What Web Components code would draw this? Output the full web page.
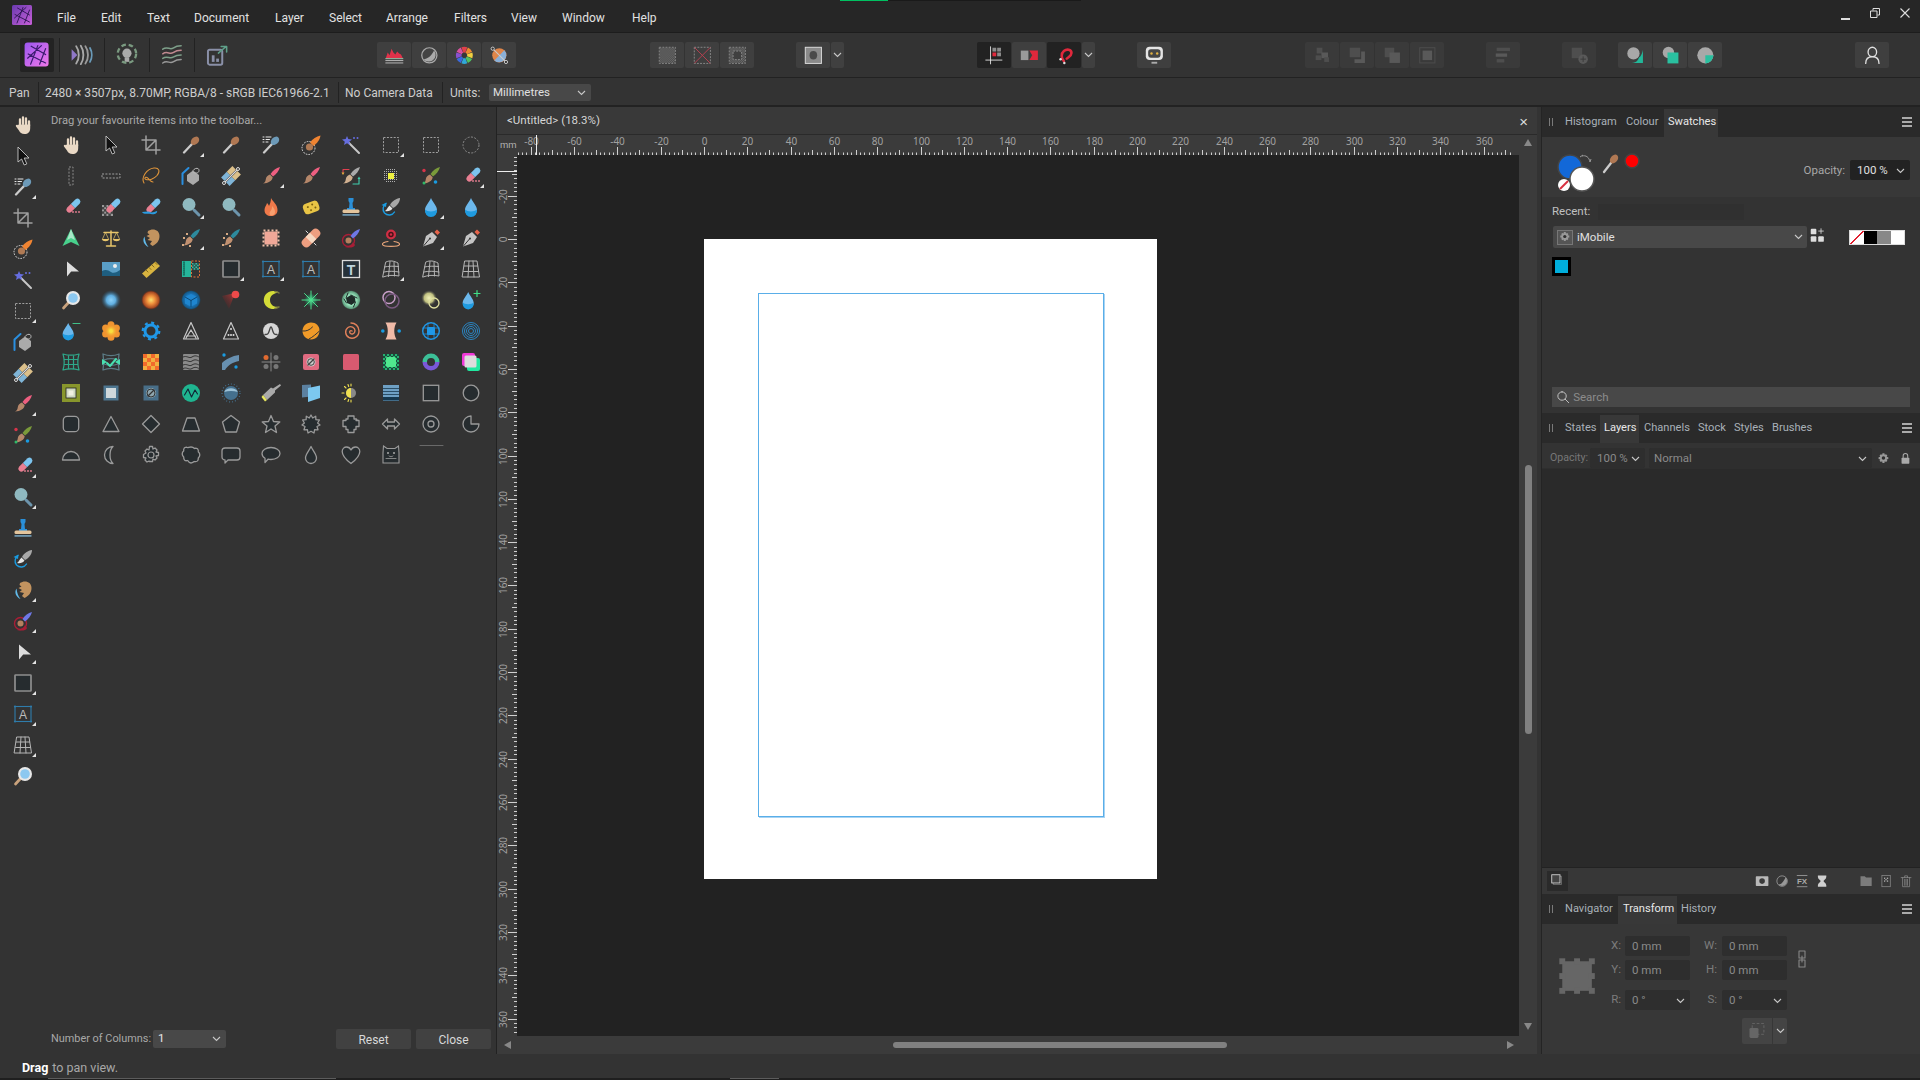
<!DOCTYPE html>
<html lang="en"><head><meta charset="utf-8"><title>Affinity Photo</title>
<style>
html,body{margin:0;padding:0;background:#333;overflow:hidden}
body{font:11.5px/1 Roboto,"Noto Sans",sans-serif;color:#c8c8c8;width:1920px;height:1080px}
</style></head><body>
<script>
/* ---------- icon library (20×20 artboard, centred on 10,10) ---------- */
const S=(d,c='#999',w=1.5,x='')=>`<path d="${d}" fill="none" stroke="${c}" stroke-width="${w}" stroke-linecap="round" stroke-linejoin="round" ${x}/>`;
const F=(d,c,x='')=>`<path d="${d}" fill="${c}" ${x}/>`;
const C=(x,y,r,c,e='')=>`<circle cx="${x}" cy="${y}" r="${r}" fill="${c}" ${e}/>`;
const R=(x,y,w,h,c,e='')=>`<rect x="${x}" y="${y}" width="${w}" height="${h}" fill="${c}" ${e}/>`;
const RG=(id,stops)=>`<radialGradient id="${id}">${stops.map(([o,c,a])=>`<stop offset="${o}" stop-color="${c}" stop-opacity="${a??1}"/>`).join('')}</radialGradient>`;
const pick=c=>S('M11 9 3 17.5','#ccc',2.3)+`<ellipse cx="14" cy="5.8" rx="3.5" ry="4.8" transform="rotate(45 14 5.8)" fill="${c}"/>`;
const brush=(c,h='#b5876a')=>F('M19 1c-1 4-3.5 7-7 9.5L9.5 8C12 4.5 15 2 19 1z',c)+F('M9 8.5l2.7 2.7c-.5 3.5-4 6-9.7 6.3 2-1 2.6-2.4 2.8-4.3C5.1 11 6.8 9 9 8.5z',h);
const eraser=F('M14.6 2.2a3 3 0 0 1 4.2 4.2L14 11.2 9.8 7z','#7cc4ee')+F('M9.8 7 14 11.2l-3.8 3.8A3 3 0 0 1 6 10.8z','#e87f92');
const mag=S('M13 13l5 5','#6d95ad',3)+C(8,7.5,6.5,'#8fb9c0');
const drop=F('M10 1C8 5.5 4 9 4 13a6 6 0 0 0 12 0C16 9 12 5.5 10 1z','#6cb8ec')+F('M4.2 12.5C6 15 14 15 15.8 12.5A6 6 0 1 1 4.2 12.5z','#1f9be0');
const nib=F('M2 18.5 5 8l6-4 5 5-4 6z','#c4c4c4')+S('M2.5 18 8.5 11','#333',1)+C(9,10.5,1,'#333')+F('M13.5 4 16 1.5l3 3-2.5 2.5z','#e8644a');
const shape=(d,x='')=>`<path d="${d}" fill="#262c2f" stroke="#9a9a9a" stroke-width="1.3" stroke-linejoin="round" ${x}/>`;
const dust=brush('#2e8a9c','#c09070')+R(2,9,2,2,'#d8ab84')+R(5,5,2,2,'#d8ab84')+R(1,16,2,2,'#d8ab84')+R(8,17,2,2,'#d8ab84');
const aframe=`<rect x="2" y="2.5" width="16" height="15" fill="none" stroke="#2f7cab" stroke-width="1.1"/>`+[[2,2.5],[18,2.5],[2,17.5],[18,17.5]].map(p=>C(p[0],p[1],1.1,'#2f7cab')).join('')+`<text x="10" y="14.5" font-size="12" text-anchor="middle" fill="#bdbdbd" font-family="Liberation Sans">A</text>`;
const gridI=S('M4 2h12l2.5 16h-17zM8 2l-1 16M12 2l1 16M3.3 7h13.4M2.6 12.5h14.8','#b5b5b5',1);
const mesh=S('M5 3c4-2 8-1 12 1l1 13c-5-1-11-1-16 1zM9 2.5 7.5 17.5M13 3l.5 14M3.5 8c4-1 9-1 14-.5M3 13c4-1 10-1 15 0','#b5b5b5',1);
const dotgrid=(()=>{let a='';for(let i=0;i<7;i++)for(let j=0;j<7;j++){if((i==0||i==6)&&(j==0||j==6))continue;a+=R(3+i*2,3+j*2,1,1,'#b0b0b0')}return a+R(7,7,6,6,'#eef040')})();
const checks=(cols,x0,y0,n,s)=>{let a='';for(let i=0;i<n;i++)for(let j=0;j<n;j++)a+=R(x0+i*s,y0+j*s,s,s,cols[(i+j)%2]);return a};
const wheelSeg=['#e0404a','#f08a30','#f0d040','#50c060','#30a8d8','#3a6ae0','#8a50d0','#d850a0'];
const wheel=wheelSeg.map((c,i)=>{const a=i*Math.PI/4-Math.PI/2-.35,b=a+.7,p=(r,t)=>`${(10+r*Math.cos(t)).toFixed(2)} ${(10+r*Math.sin(t)).toFixed(2)}`;return F(`M${p(3,a)}L${p(9,a)}A9 9 0 0 1 ${p(9,b)}L${p(3,b)}A3 3 0 0 0 ${p(3,a)}z`,c)}).join('');
const hatch=`<pattern id="h" width="2" height="2" patternUnits="userSpaceOnUse"><rect width="1" height="1" fill="#6a6a6a"/><rect x="1" y="1" width="1" height="1" fill="#6a6a6a"/><rect x="1" width="1" height="1" fill="#4a4a4a"/><rect y="1" width="1" height="1" fill="#4a4a4a"/></pattern>`;
const dsh=(x=1.5,y=1.5,w=17,h=17)=>`<rect x="${x}" y="${y}" width="${w}" height="${h}" fill="none" stroke="#8a8a8a" stroke-dasharray="2 1.3"/>`;
const logoPaths=S('M5 18 11 2.5M3 9.5l14.5 7.5M17.5 5 12.5 18M2.5 13 14 2.5M5.5 3l12 7','#3a1a6e',1);
const dim='#4e4e4e',dim2='#595959';
const ICONS={
hand:`<g stroke="#ead9c5" stroke-width="2.3" stroke-linecap="round"><path d="M7 10V4.5M10 9V2.5M13 9.5V3.5M16 11V6.5"/></g>`+F('M5.8 9.5h11.4v3.5c0 4-2.2 6-5.7 6-3 0-4.5-1.5-5.5-3.5L3 11.5c-.7-1.3.8-2.3 1.8-1.3z','#ead9c5'),
arrow:`<path d="M5 1v15l3.6-3 2.6 6 2.6-1.1-2.6-5.9H16z" fill="#111" stroke="#c8c8c8" stroke-width=".9"/>`,
crop:S('M5 1v14h14M1 5h14v14M5 15 15 5','#a0a0a0',1.5,''),
pickb:pick('#b07853'),
pickl:pick('#6d9ab8')+S('M2 2h1M5 2h5M2 4.5h1M5 4.5h3.5M2 7h1M5 7h2','#e8e8e8',1),
selb:`<circle cx="7.5" cy="13" r="6.5" fill="none" stroke="#ddd" stroke-dasharray="1.6 1.2"/>`+F('M19.5 .5c-.5 4-3.500 8-7 10.500L9 7.500C11.500 4 15.500 1.200 19.500 .5z','#f08432')+C(8.5,12,3.6,'#b07a54'),
wand:S('M8 8l10 10','#c8c8c8',2)+F('M6 1l1.3 3 3.7.5L8.2 6.8 9 10 6 8.2 3 10l.8-3.2L1 4.5l3.7-.5z','#666ee0')+C(13,3,1,'#666ee0')+C(16.5,3,1,'#666ee0'),
rsel:`<rect x="2.5" y="2.5" width="15" height="15" fill="none" stroke="#a0a0a0" stroke-dasharray="2 1.4"/>`,
esel:`<circle cx="10" cy="10" r="8" fill="none" stroke="#8c8c8c" stroke-dasharray="2 1.4"/>`,
vsel:`<rect x="8" y="1" width="4" height="18" fill="none" stroke="#8c8c8c" stroke-dasharray="2 1.4"/>`,
hsel:`<rect x="1" y="8" width="18" height="4" fill="none" stroke="#a0a0a0" stroke-dasharray="2 1.4"/>`,
lasso:S('M3 17C0 12 5 3 13 2c5-.5 6.5 3 3 7.5-3 3.5-8 5-11 4-2-.7-1-3 1-2s3 4.5 6 4.5','#e0953a',1.1),
flood:S('M1.5 18V7.5l6-5.5','#2a8fe0',2)+F('M6 9l6-4.5 6 4.5v5.5L12 19l-6-4z','#aaa')+S('M12 4.5c2-3 6-3 6 0s-4 3-6 2','#bbb',1),
swap:`<g transform="rotate(-45 10 10)"><rect x="2" y="4" width="8" height="5" fill="#7fb5d8"/><rect x="10" y="4" width="8" height="5" fill="#dcc08a"/><rect x="2" y="11" width="8" height="5" fill="#7fb5d8"/><rect x="10" y="11" width="8" height="5" fill="#dcc08a"/></g>`+S('M4 16 16 4','#ddd',1.1)+`<circle cx="3" cy="17" r="1.5" fill="#333" stroke="#ddd"/><circle cx="17" cy="3" r="1.5" fill="#333" stroke="#ddd"/>`,
bpink:brush('#ee5f80'),
brepl:brush('#aaa','#d0b090')+S('M8 3.5H2v3','#e04050',1.1)+F('M.5 6.5h3L2 9z','#e8b040')+S('M12 18h6v-5','#40d0b0',1.1)+F('M16.5 13h3L18 10.5z','#40d0b0'),
pixel:dotgrid,
mix:brush('#7a9a3a')+C(3,4.5,1.7,'#d8344a')+C(3,17,1.5,'#30b868')+C(14.5,16,1.8,'#1a9be0'),
erd:eraser+C(12,15,.9,'#e87f92')+C(15,15,.9,'#e87f92')+C(18,15,.9,'#e87f92'),
erc:checks(['#999','#444'],1,8,5,2.2)+eraser,
erw:eraser+F('M1 15c3 0 6-1 8 0s4 0 7-1c1 2-3 4-6 3-3-1-7 1-9-2z','#2a9be0'),
mag:mag,
flame:F('M10 1c2 4 6.5 6.5 6.5 12 0 4-3 6-6.5 6s-6.5-2-6.5-6c0-3 2-4.5 2.5-7 1 1 1.8 2 2 3C9 7 10 4 10 1z','#f0794a')+F('M11 9c2 2 3 4 3 6 0 2-1.5 3.5-3.5 3.5S8 16 9.5 14C11 12 11 11 11 9z','#f8a070'),
sponge:`<g transform="rotate(-20 10 10)"><rect x="2" y="5" width="16" height="11" rx="4" fill="#e8c445"/><circle cx="7" cy="9" r="1" fill="#7a6010"/><circle cx="12" cy="8" r="1" fill="#7a6010"/><circle cx="9" cy="13" r="1" fill="#7a6010"/><circle cx="14" cy="12" r="1" fill="#7a6010"/></g>`,
stamp:F('M7.5 1h5v3l-1 2 .5 5h2v2H6v-2h2l.5-5-1-2z','#2a8fd8')+R(1.5,12.5,17,3.5,'#e3c49c','rx="1.5"')+R(1.5,17,17,1.8,'#6d95ad'),
smudge:F('M19 1c0 4-3 8-7 10l-3-3c2-4 6-6.5 10-7z','#a8a8a8')+F('M8.5 8.5 11.5 11.5C10 14 7 14.5 4 14c2-1 2-3 4.5-5.5z','#e4e4e4')+S('M5 6.5C2 8.5 1 13 3.5 16c3 3 8 2.5 10-1','#1a9be0',1.4)+F('M.5 8l5-2.5L5 10z','#1a9be0'),
drop:drop,
sharp:F('M10 1 18.5 18 10 14 1.5 18z','#48d08c')+F('M10 1 14 12 10 10 6 12z','#a8e8c8'),
scale:S('M10 3v14M3 4.5h14M5.5 18h9','#e8c56a',1.5)+F('M1 11h7c0 3-7 3-7 0zM12 11h7c0 3-7 3-7 0z','#e8c56a')+S('M4.5 4.5 1.5 11M4.5 4.5 7.5 11M15.5 4.5 12.5 11M15.5 4.5 18.5 11','#e8c56a',.7),
finger:F('M7 3c4-3 11.5-2 11.5 5 0 5-3 8-7 10l-2.5-2 2-3-4.5-1 2.5-2-3.5-2 3-1.5L6.5 5z','#c2935f')+F('M3.5 8.5c-2.5 4-.5 8.5 4 10.5C5 16 4 13 3.5 8.5z','#62bcec'),
dust:dust,
patch:R(3.5,3.5,13,13,'#f0a898')+`<rect x="2.5" y="2.5" width="15" height="15" fill="none" stroke="#f0bfa8" stroke-width="2" stroke-dasharray="2 2"/>`,
band:`<g transform="rotate(45 10 10)"><rect x="5.5" y="-1" width="9" height="22" rx="4" fill="#ed9e80"/><rect x="5.5" y="7" width="9" height="6" fill="#f6d8c2"/></g>`+S('M5 3 7 5M13 15l2 2','#ddd',1),
redeye:C(7.5,12.5,6,'none','stroke="#a81e36" stroke-width="1.4"')+F('M4 19c4 1 9 1 10-2l-2-3c-1 3-4 4-8 5z','#a81e36')+F('M19 1c-1 4-3.5 7-7 9.5L9.5 8C12 4.5 15 2 19 1z','#6e78e6')+C(7.5,12.5,3,'#b5805f'),
target:C(10,6.5,5,'#d02e44')+C(10,6.5,2.7,'#44141a')+C(10,6.5,1.2,'#d02e44')+S('M7 13.5C3 14 1 15.5 1.5 16.5 2.5 19 17.5 19 18.5 16.5 19 15.5 17 14 13 13.5','#e8a57a',1.1),
nib:nib,
warrow:F('M6 2.5v15l4.2-5H18z','#ddd'),
pic:R(1,3,18,14,'#5a9ec6')+F('M1 12c4-2 6-1 9 1s6 0 9-2v6H1z','#1e5e80')+C(14,7,2,'#eee'),
ruler:F('M1 14.5 14.5 2.5 19 7 5.5 19z','#d8b440')+S('M5 11l2 2M8 8.5l2 2M11 6l2 2M14 3.5l2 2','#7d6418',.9),
cols:R(1,2,9,16,'#26b59a')+S('M3 3v14','#0d5e50',1.4,'stroke-dasharray="1 1"')+checks(['#3cb8a0','#22605a'],11,4,4,1.7)+`<rect x="10.5" y="2" width="8" height="16" fill="none" stroke="#e0703a" stroke-dasharray="2 1.5"/>`,
srect:`<rect x="2" y="2" width="16" height="16" rx=".6" fill="#262c2f" stroke="#8f8f8f" stroke-width="1.7"/>`,
atxt:aframe,
ttxt:`<rect x="1.5" y="1.5" width="17" height="17" fill="#26313a" stroke="#dcdcdc" stroke-width="1.3"/><text x="10" y="15.5" font-size="14" font-weight="700" text-anchor="middle" fill="#bcd2dc" font-family="Liberation Sans">T</text>`,
mesh:mesh,grid:gridI,
zoomt:S('M8 12 2.5 18','#c9a27c',2.7)+C(12,8,7,'#e8e8e8')+C(12,8,4.8,'#8cc8f0'),
glowb:`<defs>${RG('g',[[0,'#8cd0f8'],[.45,'#60aee0'],[1,'#2a5e80',0]])}</defs>`+C(10,10,10,'url(#g)'),
glowo:`<defs>${RG('g',[[0,'#f8e070'],[.4,'#f0903c'],[.8,'#a84a22'],[1,'#602010',0]])}</defs>`+C(10,10,10,'url(#g)'),
cube:`<defs>${RG('g',[[.5,'#1a7cc8'],[.85,'#155a8a'],[1,'#123f60',0]])}</defs>`+C(10,10,10,'url(#g)')+F('M10 4l6 3v6.5l-6 3-6-3V7z','#1f86d0')+S('M10 10.5V16.5M10 10.5 4 7M10 10.5l6-3.5','#0d4a78',1),
rdot:`<defs><linearGradient id="g" x1="1" y1="0" x2="0" y2="1"><stop offset="0" stop-color="#b83a3a"/><stop offset="1" stop-color="#3a2020" stop-opacity=".1"/></linearGradient></defs>`+F('M1 6 14 3 8 19z','url(#g)')+C(14.5,4.5,3.8,'#ef4a4a'),
cresc:F('M12 1a9 9 0 1 0 6 15.5C13 18 9 14.5 9 10s4-7 9-7.5A9 9 0 0 0 12 1z','#d4dc38')+S('M14 1.5c2 .2 3 .6 4 1.5M14 18.5c2-.2 3-.6 4-1.5','#7a7a40',1.5),
gstar:`<defs>${RG('g',[[0,'#60f0a0'],[.6,'#2a8860',.6],[1,'#222',0]])}</defs>`+C(10,10,8,'url(#g)')+S('M10 1v18M1 10h18M3.5 3.5l13 13M16.5 3.5l-13 13','#4ae48e',1),
apert:`<defs>${RG('g',[[.5,'#9ce8c0'],[.85,'#60a080'],[1,'#333',0]])}</defs>`+C(10,10,10,'url(#g)')+F('M10 5l4 2.5.5 4.5-4 3-4.5-2L5 8z','#1f2a28')+S('M10 5l6 3M14.5 12l-2 5M5.5 13 3 9M5 8l2-5','#1f2a28',1),
rings:`<circle cx="8" cy="7.5" r="6" fill="none" stroke="#c8a0c8" stroke-width="1.5"/><circle cx="11" cy="11" r="7" fill="none" stroke="#7a5a80" stroke-width="1.5"/>`,
yring:`<defs>${RG('g',[[0,'#f0f0b8'],[.6,'#c0c080'],[1,'#444',0]])}</defs>`+C(8,8,8,'url(#g)')+`<circle cx="13" cy="13" r="5" fill="none" stroke="#e0e0a0" stroke-width="1.3"/>`,
dropp:`<g transform="translate(-2 1) scale(.92)">${drop}</g>`+S('M16 .5v6M13 3.5h6','#40e088',1.2),
dropm:`<g transform="translate(-2 1) scale(.92)">${drop}</g>`+S('M12 2.5h7','#40c088',1.2),
flower:`<defs>${RG('g',[[.2,'#f8e040'],[.8,'#f4a030',.3],[1,'#f4a030',0]])}</defs>`+[0,60,120,180,240,300].map(a=>C((10+6.2*Math.sin(a*Math.PI/180)).toFixed(2),(10-6.2*Math.cos(a*Math.PI/180)).toFixed(2),3.5,'#f09430')).join('')+C(10,10,6,'#f09430')+C(10,10,7,'url(#g)'),
bgear:`<circle cx="10" cy="10" r="6" fill="none" stroke="#2098e8" stroke-width="3"/><circle cx="10" cy="10" r="8.3" fill="none" stroke="#2098e8" stroke-width="2.2" stroke-dasharray="3 3.5"/>`,
triA:S('M10 1.5 2.5 18h15zM10 9 5 17M10 9l5 8M5.5 15h9','#c8c8c8',1.2),
triD:S('M10 1.5 2.5 18h15z','#c8c8c8',1.2)+C(10,8,1,'#ddd')+C(7.5,14,1,'#ddd')+C(10,14,1,'#ddd')+C(12.5,14,1,'#ddd'),
wcirc:C(10,10,8,'#d6d6d6')+S('M4 13.5c3 0 3.5-.5 5-6 .6-2 1.4-2 2 0 1.5 5.5 2 6 5 6','#444',1.3),
oblob:F('M10 1.500c5 0 8.500 3.500 8.500 8 0 5-3.500 9-8.500 9s-8.500-4-8.500-8.500S5 1.500 10 1.500z','#f09a28')+S('M1.500 10c4 .5 7-1 10-4M8 18c4-2 7-5 10.500-8','#333',1),
spiral:S('M11 10c-1.5-1-3 .5-2 2 1.2 2 5 1 5-2.5 0-3-4-5-7-3-3.5 2.5-3 8 1 10 4.5 2 10-1 10-6.5 0-5-4-8-8-8','#e0805a',1.4),
hglass:F('M4.5 1.5h11c-3 5-3 12 0 17h-11c3-5 3-12 0-17z','#f0bba8')+C(1.8,10,1.8,'#1a9be0')+C(18.2,10,1.8,'#1a9be0'),
btarget:`<circle cx="10" cy="10" r="8.3" fill="none" stroke="#2098e8" stroke-width="1.4"/>`+R(6,6,8,8,'#2098e8','rx="1.5"')+S('M2 7h16M2 13h16M7 2v16M13 2v16','#2098e8',.8),
brings:[8.5,6.5,4.5,2.5].map(r=>`<circle cx="10" cy="10" r="${r}" fill="none" stroke="#2a86c4" stroke-width="1"/>`).join(''),
tmesh:S('M2 2c5 1.5 11 1.5 16 0-1.5 5-1.5 11 0 16-5-1.5-11-1.5-16 0 1.5-5 1.5-11 0-16zM7.5 3v14M12.5 3v14M3 7.5h14M3 12.5h14','#2ea88a',1.2),
tcheck:S('M2 2c5 2 11 2 16 0-1 5-1 11 0 16-5-2-11-2-16 0 1-5 1-11 0-16zM3 8c5-2 9-2 14 0M3 12c5 2 9 2 14 0','#5b7a84',1.3)+S('M6 11l3 3 6-7','#48e0b0',2)+F('M1 7l5 3-5 3zM19 7l-5 3 5 3z','#48e0b0'),
ochk:checks(['#f26a2c','#f2b040'],2,2,4,4),
waves:R(2,2,16,16,'#8a8a8a','rx="1"')+S('M2 5c4-2 6 2 9 0s5-1 7 0M2 9c4-2 6 2 9 0s5-1 7 0M2 13c4-2 6 2 9 0s5-1 7 0M2 16.5c4-2 6 2 9 0s5-1 7 0','#333',1),
swoosh:F('M1 18v-7c4-4 10-7 17-8v6c-6 1-11 4-14 9z','#6890b0')+C(3,3,1.7,'#1a9be0')+C(15,15,1.7,'#1a9be0'),
cross:S('M10 1v18M1 10h18','#8a8a8a',1)+C(5,5.5,2.5,'#e06a30')+C(15,5.5,2.5,'#777')+C(5,14.5,2.5,'#777')+C(15,14.5,2.5,'#777'),
pno:R(2,2,16,16,'#e06a80','rx="2"')+C(10,10,4.5,'#ccc')+S('M7 13l6-6','#444',1.3)+C(10,10,3.3,'none','stroke="#444"'),
psq:R(2,2,16,16,'#d85a70','rx="1.5"'),
gsq:checks(['#26b070','#1a4a3c'],2,2,8,2)+R(5,5,10,10,'#50e88e','rx="1.5"'),
ring2:F('M1.5 10a8.5 8.5 0 0 1 17 0h-4.5a4 4 0 0 0-8 0z','#3cc098')+F('M1.5 10a8.5 8.5 0 0 0 17 0h-4.5a4 4 0 0 1-8 0z','#7a58d8'),
sq2:R(1,1,13,13,'#f038d8','rx="2"')+R(6,6,13,13,'#20e8a0','rx="2"')+R(3.5,3.5,12,12,'#dcdcdc','rx="1.5"'),
olive:R(1,1,18,18,'#88962c')+`<rect x="5" y="5" width="10" height="10" fill="#ced8c0" stroke="#222" stroke-width=".8"/>`+R(7.5,7.5,5,5,'#f0f0e0'),
gblue:R(2.5,2.5,15,15,'#4e7690')+R(5,5,10,10,'#cfd8dc'),
gno:R(2.5,2.5,15,15,'#486e88')+C(10,10,5,'#8ea5ae')+S('M7 13l6-6','#333',1.2)+C(10,10,4,'none','stroke="#333"'),
gwave:C(10,10,9,'#1fb590')+S('M3.5 12 7 6l3.5 8L14 7l2.5 4','#123',1.1),
ball:C(10,10,7,'#44708e')+F('M3.2 9c2-5 11.6-5 13.6 0-4-1.5-9.6-1.5-13.6 0z','#9cc2d8')+`<circle cx="10" cy="10" r="9" fill="none" stroke="#44708e" stroke-width="1.2" stroke-dasharray="1 2"/>`,
torch:F('M19 1 12 5.5l-2-1L2 12l4 5 8-7.5 0-2 6-5z','#aaa')+F('M2 12l4 5-2 1.5L.5 14z','#e8e860'),
panels:F('M1 2l9-.5v12l-9 1z','#5b80a0')+F('M7 5l12-2.5V15L7 19z','#7cc8f0'),
sun:C(10,10,5,'#888')+F('M10 5a5 5 0 0 0 0 10z','#f0e050')+S('M10 1v2M10 17v2M1 10h2M3.5 3.5 5 5M3.5 16.5 5 15','#f0e050',1.1)+S('M7 1.5l.7 2M7 18.5l.7-2','#f0e050',1.1),
stripes:R(2,2,16,16,'#6ea0c4')+S('M2 5.5h16M2 8.5h16M2 11.5h16','#1a3a50',.8)+R(2,14,16,3.5,'#16384e'),
scirc:`<circle cx="10" cy="10" r="7.8" fill="#262c2f" stroke="#9a9a9a" stroke-width="1.3"/>`,
ssq:`<rect x="2.3" y="2.3" width="15.4" height="15.4" fill="#262c2f" stroke="#9a9a9a" stroke-width="1.3"/>`,
srnd:`<rect x="2.3" y="2.3" width="15.4" height="15.4" rx="4" fill="#262c2f" stroke="#9a9a9a" stroke-width="1.3"/>`,
stri:shape('M10 2.5 18 17.5H2z'),sdia:shape('M10 1.5 18.5 10 10 18.5 1.5 10z'),strap:shape('M6 4h8l4.5 13h-17z'),spent:shape('M10 1.5 18.5 8 15.5 18h-11L1.5 8z'),
sstar:shape('M10 1.5 12.5 7.5 18.8 8 14 12l1.5 6.5L10 15l-5.5 3.5L6 12 1.2 8l6.3-.5z'),
sburst:shape('M10 1l1.7 3 3-1.8.2 3.5 3.5.3-1.8 3 2.4 2-3 1.5 1 3.3-3.4-.2-.6 3.4-3-1.7-3 1.7-.6-3.4-3.4.2 1-3.3-3-1.5 2.4-2-1.8-3 3.5-.3.2-3.5 3 1.8z'),
scog:shape('M7 2h6v3h2.500l1 1.500h-1.500v0H18v6h-3v3h-2v3H7v-3H5v-3H2v-6h3V5h2z'),
sarr:shape('M1.5 10 6.5 5v3h7V5l5 5-5 5v-3h-7v3z'),
sdon:`<circle cx="10" cy="10" r="8" fill="#262c2f" stroke="#9a9a9a" stroke-width="1.3"/><circle cx="10" cy="10" r="3" fill="#262c2f" stroke="#9a9a9a" stroke-width="1.3"/>`,
spie:shape('M10 2a8 8 0 1 0 8 8h-8z'),
shalf:shape('M1.5 15a8.5 8.5 0 0 1 17 0z'),
smoon:shape('M12 1.5a8.5 8.5 0 0 0 0 17C8 15 8 5 12 1.5z'),
sgear:shape('M8.5 1.5h3l.5 2.5 2-1 2 2-1 2 2.5.5v3l-2.5.5 1 2-2 2-2-1-.5 2.5h-3L8 16l-2 1-2-2 1-2-2.5-.5v-3L5 8 4 6l2-2 2 1z')+`<circle cx="10" cy="10" r="3" fill="none" stroke="#9a9a9a" stroke-width="1.2"/>`,
scloud:shape('M10 2c2 0 3 1 3.5 1.5 1-.5 3-.3 3.5 1 .5 1 .3 2 .3 2.5 1 .5 1.5 2 1.5 3s-.5 2-1.5 3c0 .8 0 1.7-.5 2.5s-2.5 1.3-3.5 1C12.5 17 11 18 10 18s-2.5-1-3.3-2.5c-1 .3-3 .2-3.5-1-.5-.8-.5-1.7-.5-2.5-1-1-1.5-2-1.5-3s.5-2.5 1.5-3c0-.5-.2-1.5.3-2.5.5-1.3 2.5-1.5 3.5-1C7 3 8 2 10 2z'),
sbub:shape('M4 3h12a3 3 0 0 1 3 3v6a3 3 0 0 1-3 3H7l-3 3v-3a3 3 0 0 1-3-3V6a3 3 0 0 1 3-3z'),
sbub2:shape('M10 2.5c5 0 9 2.5 9 6s-4 6-9 6c-.8 0-2 0-3-.3L4 17.5v-4.3c-2-1.2-3-2.8-3-4.7 0-3.5 4-6 9-6z'),
stear:shape('M10 1.5C8 6 4.5 9 4.5 13a5.5 5.5 0 0 0 11 0C15.5 9 12 6 10 1.5z'),
sheart:shape('M10 18.5C4 14 1.2 10.5 1.2 6.5 1.2 3.5 3.5 2 5.5 2c2 0 3.5 1 4.5 3 1-2 2.5-3 4.5-3 2 0 4.3 1.5 4.3 4.5 0 4-2.8 7.5-8.8 12z'),
scat:`<path d="M2.5 1 6 3.5h8L17.500 1 18 8v10H2V8z" fill="#262c2f" stroke="#9a9a9a" stroke-width="1.1"/>`+C(7,8,1,'#aaa')+C(13,8,1,'#aaa')+S('M8 11c1 1 3 1 4 0M5 13.5h10','#9a9a9a',.8),
sline:S('M-1 0H22','#777',.8,'transform="translate(0 .5)"'),
/* top bar */
persona:`<defs><linearGradient id="g" x1="0" y1="0" x2="1" y2="1"><stop offset="0" stop-color="#9b56f0"/><stop offset="1" stop-color="#f078e8"/></linearGradient></defs>`+R(0,0,20,20,'url(#g)','rx="2.5"')+logoPaths,
logo:`<defs><linearGradient id="g" x1="0" y1="0" x2="1" y2="1"><stop offset="0" stop-color="#6a3ab0"/><stop offset="1" stop-color="#c860d8"/></linearGradient></defs>`+R(0,0,20,20,'url(#g)','rx="1.5"')+S('M5 18 11 2.5M3 9.5l14.5 7.5M17.5 5 12.5 18M2.5 13 14 2.5M5.5 3l12 7','#2a1450',.9),
liq:F('M1 5l5 5-5 5z','#8f78c8')+S('M5 2.5c3 4 3 11 0 15M9 2c3 4.5 3 11.5 0 16','#a8a8a8',1.6)+S('M13 2.5c3 4 3 11 0 15','#9a9a9a',1.6)+S('M17 4c2 3.5 2 8.5 0 12','#6a9ab8',1.6),
dev:C(10,8.5,4,'#aaa')+R(8,12,4,4,'#aaa')+`<circle cx="10" cy="9" r="8" fill="none" stroke="#7a9a80" stroke-width="2" stroke-dasharray="4 2.5"/>`,
tone:S('M2 5c4-3 6 1 9-1s5-2 7-2','#7ea08a',1.3)+S('M2 9c4-3 6 1 9-1s5-2 7-2','#c08a90',1.3)+S('M2 13c4-3 6 1 9-1s5-2 7-2','#7ea08a',1.3)+S('M2 17c4-3 6 1 9-1s5-2 7-2','#999',1.3),
exp:`<rect x="1.5" y="5" width="13" height="13.5" rx="1.5" fill="none" stroke="#8a90a8" stroke-width="1.8"/>`+R(5,10,2.5,6,'#8a90a8')+R(9,13,2.5,3,'#8a90a8')+S('M11 8l7-6M13.5 2H18.5V7','#5fa08a',1.4),
hist:S('M1 18h18M1 15.5h18','#ddd',.8)+F('M1 13l2-6 2 3 2-7 2 4 2 2 2-3 2 2 2 1 2 4z','#e0324a')+S('M1 13.5h18','#9ccab0',1),
tonei:`<circle cx="10" cy="10" r="8" fill="#444" stroke="#aaa" stroke-width="1.3"/>`+F('M15 5a7 7 0 0 1-11 9c4 0 8-3 11-9z','#aaa'),
wheel:wheel+C(10,10,2.4,'#383838'),
scope:`<circle cx="10" cy="10" r="7.5" fill="#e0864a"/>`+F('M15.3 4.7a7.5 7.5 0 0 1-10.6 10.6z','#8ab0d8')+S('M2.5 2.5l15 15','#ccc',1.1)+`<circle cx="3" cy="3" r="1.7" fill="#333" stroke="#ccc"/><circle cx="17" cy="17" r="1.7" fill="#333" stroke="#ccc"/>`,
sfull:`<defs>${hatch}</defs>`+R(2,2,16,16,'url(#h)')+dsh(),
sx:dsh()+S('M2 2l16 16M18 2 2 18','#b84050',1),
sinv:`<defs>${hatch}</defs>`+R(2,2,16,16,'url(#h)')+dsh()+R(5.5,5.5,9,9,'#404040')+dsh(5.5,5.5,9,9),
mask:`<rect x="1.5" y="1.5" width="17" height="17" fill="#8a8a8a" stroke="#dedede" stroke-width="1"/><ellipse cx="10" cy="10" rx="4" ry="4.5" fill="#4a4a4a"/>`,
snapg:S('M6 1v18M1 15h17','#eee',.9)+R(8,2,4,4,'#8c8c8c')+R(13,2,4,4,'#8c8c8c')+R(13,7,4,4,'#8c8c8c')+R(8,7,4,4,'#e0283c'),
snapr:R(1,5,8,10,'#9a9a9a')+F('M10 5h9v10h-9l3-5z','#e0283c'),
magnet:S('M9.5 16c-3-3-3-8 0-10.5s8-2 8 2c0 3-3 4-5 6','#e0283c',2.7,'')+C(6,14,1.3,'#ddd')+C(10,18,1.3,'#ddd'),
robot:F('M5 1h10c2.5 0 4 1.5 4 4v6c0 2.5-1.5 4-4 4H5c-2.5 0-4-1.5-4-4V5c0-2.5 1.5-4 4-4z','#e4e4e4')+R(3.5,3.5,13,9,'#444','rx="3"')+C(7,8,1.3,'#e0b040')+C(13,8,1.3,'#e0b040')+R(7,16.8,6,2,'#aaa'),
d1:R(4,2,6,6,dim)+R(9,7,7,6,dim2)+R(3,10,6,5,dim)+R(12,12,5,5,dim),
d2:R(2,2,11,10,dim)+F('M14 6h4v12H7v-4h7z',dim2),
d3:R(2,2,10,10,dim)+R(7,7,11,11,dim2),
d4:`<rect x="2" y="2" width="16" height="16" fill="none" stroke="${dim}"/>`+R(5,5,10,10,dim2),
d5:R(3,2,14,3.5,dim)+R(2,8,12,3.5,dim2)+R(3,14,8,3.5,dim),
d6:R(2,2,11,11,dim)+C(14,14,5,dim2)+S('M14 11.5v5M11.5 14h5','#3a3a3a',1),
op1:C(8,8,6.5,'#a8a8a8')+F('M18 4v14H6c6 0 7-4 8-6 1 0 3-3 4-8z','#22b89a'),
op2:C(8,7,6,'#a8a8a8')+R(7,7,11.5,11.5,'#2ac0a0'),
op3:C(10,10,8.5,'#a8a8a8')+F('M18.5 10a8.5 8.5 0 0 1-8.5 8.5V10z','#2ac0a0'),
user:S('M3 18.5c0-4.5 2.5-7 7-7s7 2.5 7 7M10 11.5a4.5 5 0 1 0 0-10 4.5 5 0 0 0 0 10z','#e0e0e0',1.4),
add:R(1,1,6,6,'#ddd','rx="1"')+R(1,9,6,6,'#ddd','rx="1"')+R(9,9,6,6,'#ddd','rx="1"')+S('M12 1v5M9.5 3.5h5','#ddd',.9),
layersb:`<rect x="4" y="4" width="11" height="11" fill="none" stroke="#777"/><rect x="2" y="2" width="11" height="11" fill="#444" stroke="#ddd" stroke-width="1.1"/>`,
mbtn:R(1,3,18,14,'#b8b8b8','rx="1"')+C(10,10,4,'#3a3a3a'),
adj:C(10,10,7.5,'none','stroke="#999" stroke-width="1.2"')+F('M15 5a7 7 0 0 1-10 10c4 0 7-4 10-10z','#999'),
fxb:S('M3 2h14M3 18h14','#aaa',1.1)+`<text x="10" y="14.5" font-size="11.5" font-weight="700" text-anchor="middle" fill="#aaa" font-family="Liberation Sans">FX</text>`,
glass:F('M4 2h12v2c0 3-4 4.5-4 6s4 3 4 6v2H4v-2c0-3 4-4.5 4-6S4 7 4 4z','#cfcfcf'),
folder:F('M2 3h6l2 2h8v12H2z','#7c7c7c'),
mfilt:`<rect x="4" y="2" width="12" height="16" fill="none" stroke="#888" stroke-width="1.1"/>`+checks(['#aaa','#3a3a3a'],7,5,3,2),
trash:S('M3 5h14M8 5V2.5h4V5M5 5v13h10V5M8 7.5V16M10 7.5V16M12 7.5V16','#888',1.1),
gearm:F('M8.5 2h3l.5 2.5 2-1 2 2-1.1 2L17.5 8v3l-2.6.6 1.1 2-2 2-2-1.1L11.5 17h-3L8 14.5 6 15.6l-2-2 1.1-2L2.5 11V8l2.6-.5L4 5.5l2-2 2 1z','#999')+C(10,9.5,2.7,'#2e2e2e'),
lock:R(4,9,12,9,'#aaa','rx="1"')+S('M6.5 9V6a3.5 3.5 0 0 1 7 0v3','#aaa',1.6),
searchi:S('M8.5 2.5a6 6 0 1 1 0 12 6 6 0 0 1 0-12zM13 13l5 5','#ccc',1.3),
link:S('M7 2h6v7H7zM7 11h6v7H7zM10 7v6','#888',1.1),
trbtn:`<rect x="5" y="2" width="13" height="12" fill="none" stroke="#666" stroke-dasharray="3 2"/>`+R(2,7,10,11,'#666','rx="1.5"'),
anchor:(()=>{let a=R(2,2,16,16,'#666');[[1,1],[9,1],[17,1],[1,9],[17,9],[1,17],[9,17],[17,17]].forEach(p=>a+=R(p[0]-.6,p[1]-.6,3.2,3.2,'#666'));return a})(),
};
const SKIN=`:host{display:inline-flex;align-items:center;justify-content:center;flex:none}`;
/* ---------- tiny definition helper ---------- */
function def(name,css,html,init){
  customElements.define(name,class extends HTMLElement{
    connectedCallback(){
      if(this.shadowRoot)return;
      const r=this.attachShadow({mode:'open'});
      r.innerHTML=`<style>${css}</style>`+(typeof html==='function'?html(this):html);
      if(init)init(this,r);
    }
  });
}
/* Icon: bounding box slightly larger than the art, so the corner triangle can sit outside of it */
def('af-icon',SKIN+`svg{display:block;overflow:visible}`,h=>{
  const s=+(h.getAttribute('s')||20),full=s*(26/20);
  return `<svg width="${full}" height="${full}" viewBox="-3 -3 26 26" aria-hidden="true">${ICONS[h.getAttribute('n')]||''}${h.hasAttribute('c')?'<path d="M23 18v4h-4z" fill="#e4e4e4"/>':''}</svg>`;
});
def('af-chev',SKIN,`<svg width="9" height="6" viewBox="0 0 9 6"><path d="M1 1l3.5 3.5L8 1" fill="none" stroke="#c8c8c8" stroke-width="1.1"/></svg>`);
def('af-burger',SKIN+`:host{flex-direction:column;gap:2px}i{display:block;width:10px;height:2px;background:#aaa}`,`<i></i><i></i><i></i>`);
def('af-grip',SKIN+`:host{gap:2px;width:4px}i{display:block;width:1px;height:8px;background:#7a7a7a}`,`<i></i><i></i>`);
/* Menu bar */
def('af-menubar',`:host{display:flex;align-items:center;height:32px;background:#262626;border-bottom:1px solid #1d1d1d;box-sizing:content-box;position:relative;padding-left:9px}
.s{position:absolute;left:840px;top:0;width:241px;height:1px;background:#1a1a1a}.s i{display:block;width:48px;height:1px;background:#00c060}
.lg{margin-top:-2px}
.w{margin-left:auto;display:flex;align-items:center;gap:0;padding-right:7px}`,
`<div class="s"><i></i></div><af-icon class="lg" n="logo" s="20"></af-icon><slot></slot>
<div class="w"><slot name="win"></slot></div>`);
def('af-menu-item',`:host{display:block;font-size:12px;color:#e2e2e2;margin-top:4px;white-space:nowrap}`,`<slot></slot>`);
/* Persona + tool bar */
def('af-toolbar',`:host{display:flex;align-items:center;height:44px;background:#333;border-bottom:1px solid #222;padding-left:15px}`,`<slot></slot>`);
def('af-persona',`:host{display:flex;align-items:center;justify-content:center;width:45px;height:34px;border-right:1px solid #222;box-sizing:border-box}
.on{display:flex;align-items:center;justify-content:center;width:34px;height:34px;background:#232323;border-radius:2px}:host([last]){border-right:0}`,`<span class="on"><slot></slot></span>`,
(h,r)=>{if(!h.hasAttribute('on'))r.querySelector('.on').style.background='none'});
def('af-group',`:host{display:flex;gap:1px}`,`<slot></slot>`);
def('af-tbtn',`:host{display:flex;align-items:center;justify-content:center;width:34px;height:26px;background:#3f3f3f;border-radius:2px}
:host([dark]){background:#222}:host([dim]){background:#3a3a3a}:host([narrow]){width:13px;background:#404040}`,`<slot></slot>`);
/* Context bar */
def('af-context',`:host{display:flex;align-items:center;height:25px;padding-top:2px;background:#333;border-bottom:2px solid #222;font-size:12px;color:#cdcdcd}`,`<slot></slot>`);
def('af-ctx',`:host{display:flex;align-items:center;height:21px;box-sizing:border-box;border-right:1px solid #222;white-space:nowrap}:host([last]){border-right:0}`,`<slot></slot>`);
def('af-field',`:host{display:flex;align-items:center;box-sizing:border-box;background:var(--bg,#2c2c2c);height:20px;padding:1px 5px 0 7px;border-radius:2px;white-space:nowrap;color:var(--fg,#909090);font-size:11.5px;flex:none}
span{flex:1}`,`<span><slot></slot></span><slot name="end"></slot>`);
/* Tools column */
def('af-tools',`:host{display:grid;grid-auto-rows:31px;justify-items:center;align-items:center;width:46px;padding-top:2.5px;align-content:start;box-sizing:border-box}`,`<slot></slot>`);
def('af-customise',`:host{display:flex;flex-direction:column;width:451px;height:100%;box-sizing:border-box;padding:0 5px 5px 5px;border-right:1px solid #222;color:#b5b5b5;font-size:11.2px}
.t{height:22.5px;padding-top:7px;box-sizing:border-box;line-height:13px;color:#a8a8a8;white-space:nowrap}
.g{display:grid;grid-template-columns:repeat(11,40px);grid-auto-rows:31px;justify-items:center;align-items:center;flex:1;align-content:start}
.f{display:flex;align-items:center;height:20px}`,
`<div class="t">Drag your favourite items into the toolbar...</div><div class="g"><slot></slot></div>
<div class="f"><slot name="foot"></slot></div>`);
def('af-btn',`:host{display:flex;align-items:center;justify-content:center;width:75px;height:20px;padding-top:1px;box-sizing:border-box;background:#414141;border-radius:2px;color:#d8d8d8;font-size:12px}`,`<slot></slot>`);
/* Rulers */
const RS=2.1655;
def('af-hruler',`:host{display:block;height:20px;background:#3b3b3b;overflow:hidden}svg{display:block}`,()=>{
 let t='',x0=187;for(let u=-86;u<=372;u+=2){const x=Math.round(x0+u*RS)+.5;if(x<1||x>1001)continue;const L=u%20==0?8:u%10==0?5:2.5;t+=`<path d="M${x} ${20-L}V20" stroke="#cfcfcf"/>`;if(u%20==0)t+=`<text x="${x}" y="10" text-anchor="middle">${u}</text>`}
 return `<svg width="1002" height="20" font-size="10" fill="#a0a0a0" font-family="Noto Sans,sans-serif">${t}<path d="M19.5 0V20" stroke="#eee"/></svg>`});
def('af-vruler',`:host{display:block;width:20px;background:#3b3b3b;overflow:hidden}svg{display:block}`,()=>{
 let t='',y0=84;for(let u=-38;u<=372;u+=2){const y=Math.round(y0+u*RS)+.5;if(y<1||y>880)continue;const L=u%20==0?9:u%10==0?5:3;t+=`<path d="M${20-L} ${y}H20" stroke="#cfcfcf"/>`;if(u%20==0)t+=`<text transform="translate(9.5 ${y}) rotate(-90)" text-anchor="middle">${u}</text>`}
 return `<svg width="20" height="881" font-size="10" fill="#a0a0a0" font-family="Noto Sans,sans-serif">${t}<path d="M0 16.5H20" stroke="#eee"/></svg>`});
/* Document view */
def('af-doc',`:host{display:grid;grid-template-columns:20px 1002px 18px;grid-template-rows:28px 20px 881px 18px;width:1040px;background:#3b3b3b}
.tab{grid-column:1/-1;display:flex;align-items:center;background:#393939;border-bottom:1px solid #2a2a2a;padding:1px 9px 0 10px;font-size:11.5px;color:#d6d6d6;box-sizing:border-box}
.tab span{flex:1}.x{color:#ddd;font-size:15px;line-height:1;font-family:"Liberation Sans",sans-serif}
.mm{display:flex;justify-content:flex-start;padding:5px 0 0 3px;font-size:9.5px;color:#b0b0b0;box-sizing:border-box}
.can{background:#222;padding:84px 0 0 187px;box-sizing:border-box;overflow:hidden}
.vs,.hs{position:relative;background:#3b3b3b}.arr{position:absolute;width:0;height:0;border:4px solid transparent}
.thumbv{position:absolute;left:6px;top:310px;width:7px;height:269px;background:#808080;border-radius:4px}
.thumbh{position:absolute;left:396px;top:6px;width:334px;height:6px;background:#808080;border-radius:3px}
.hs{grid-column:1/3;}
.corner{background:#3b3b3b}`,
`<div class="tab"><span>&lt;Untitled&gt; (18.3%)</span><span class="x" style="flex:none">×</span></div>
<div class="mm">mm</div><af-hruler></af-hruler><div class="corner"></div>
<af-vruler></af-vruler><div class="can"><slot></slot></div>
<div class="vs"><i class="arr" style="left:5px;top:-16px;border-bottom:7px solid #888;border-top:0"></i><i class="thumbv"></i><i class="arr" style="left:5px;bottom:6px;border-top:7px solid #888;border-bottom:0"></i></div>
<div class="hs"><i class="arr" style="left:7px;top:5px;border-right:7px solid #888;border-left:0"></i><i class="thumbh"></i><i class="arr" style="right:5px;top:5px;border-left:7px solid #888;border-right:0"></i></div>
<div class="corner"></div>`);
def('af-page',`:host{display:block;width:453px;height:640px;background:#fff;padding:54px 53px 62px 54px;box-sizing:border-box}div{height:100%;box-sizing:border-box;border:1px solid #5aaee8;box-shadow:1px 1px 0 #a8d4f4}`,`<div></div>`);
/* Panels */
def('af-panel',`:host{display:flex;flex-direction:column;min-height:0;background:#353535}
.tabs{display:flex;align-items:flex-end;height:30px;flex:none;background:#2a2a2a;box-sizing:border-box;position:relative;padding-left:19px}
.g{position:absolute;left:7px;top:11px}.b{position:absolute;right:8px;top:10px}
.body{flex:1;display:flex;flex-direction:column;min-height:0}`,
h=>`<div class="tabs"><af-grip class="g"></af-grip><slot name="tab"></slot><af-burger class="b"></af-burger></div><div class="body"><slot></slot></div>`);
def('af-tab',`:host{display:flex;align-items:center;height:28px;padding:0 0 2px 4px;box-sizing:border-box;font-size:11.1px;color:#a9b1b8;white-space:nowrap}
:host([on]){background:#383838;color:#e8e8e8}`,`<slot></slot>`);
def('af-swatches',`:host{display:flex;flex-direction:column;flex:1;color:#c0c0c0;font-size:11.5px;background:#333}
.top{display:flex;height:60px;background:#383838;padding:11px 10px 0 10px;box-sizing:border-box}
.o{margin-left:auto;display:flex;align-items:center;gap:5px;height:20px;margin-top:12px;color:#a8a8a8}
.o span{padding-top:1px}
.rec{display:flex;align-items:center;height:16px;margin:7px 0 0 10px;color:#c0c0c0}.rec i{display:block;width:146px;height:16px;background:#303030;margin-left:8px}
.set{display:flex;align-items:center;margin:6px 0 0 11px;height:22px}
.sel{display:flex;align-items:center;width:254px;height:22px;background:#484848;border-radius:2px;padding:0 4px;box-sizing:border-box;color:#e0e0e0;gap:4px}
.sel .gb{display:flex;align-items:center;justify-content:center;width:16px;height:15px;border:1px solid #777;box-sizing:border-box;background:#555}
.sel span{flex:1;padding-top:1px}
.qs{display:flex;margin-left:18px;border:1px solid #ddd;height:15px;width:56px;box-sizing:border-box}.qs i{flex:1;display:block}
.one{width:19px;height:19px;border:1px solid #000;box-sizing:border-box;padding:2px;margin:9px 0 0 10px;background:#000}
.one i{display:block;width:100%;height:100%;background:#00aedc}
.srch{margin:auto 10px 6px 10px;height:20px;background:#484848;display:flex;align-items:center;gap:1px;padding:1px 0 0 2px;color:#8c8c8c;box-sizing:border-box}`,
`<div class="top">
<svg width="88" height="44" viewBox="0 0 88 44" overflow="visible"><circle cx="18" cy="19" r="12" fill="#1268d8" stroke="#444" stroke-width="1.5"/><circle cx="30" cy="31" r="12" fill="#fff" stroke="#555" stroke-width="1.5"/><circle cx="12" cy="37" r="6" fill="#fff"/><path d="M8 41 16 33" stroke="#d83040" stroke-width="2"/><path d="M30 8c4-1 7 1 8 6M28 9l3-2M38 14l1-3" fill="none" stroke="#999" stroke-width="1"/><path d="M59 15 52 24" stroke="#ccc" stroke-width="2.3" stroke-linecap="round"/><ellipse cx="62" cy="11" rx="3.5" ry="5" transform="rotate(40 62 11)" fill="#b07853"/><circle cx="80" cy="13" r="7" fill="#f00" stroke="#444" stroke-width="1.5"/></svg>
<div class="o"><span>Opacity:</span><af-field style="width:60px;--bg:#222;--fg:#e0e0e0">100 %<af-chev slot="end"></af-chev></af-field></div></div>
<div class="rec">Recent:<i></i></div>
<div class="set"><div class="sel"><b class="gb"><af-icon n="gearm" s="12"></af-icon></b><span>iMobile</span><af-chev></af-chev></div>
<af-icon n="add" s="18.7" style="width:24px;height:24px"></af-icon>
<div class="qs"><i style="background:linear-gradient(135deg,#fff 46%,#e02030 46%,#e02030 54%,#fff 54%)"></i><i style="background:#000"></i><i style="background:#888"></i><i style="background:#fff"></i></div></div>
<div class="one"><i></i></div>
<div class="srch"><af-icon n="searchi" s="14"></af-icon><span>Search</span></div>`);
def('af-layers',`:host{display:flex;flex-direction:column;flex:1;background:#333}
.row{display:flex;align-items:center;height:25px;padding:5px 0 0 8px;box-sizing:border-box;color:#777;flex:none}
.row>span{width:40px;white-space:nowrap;font-size:10.6px}.row .ic{width:22px;display:flex;justify-content:center}
.list{flex:1;background:#2a2a2a;border-bottom:1px solid #222;border-top:1px solid #2e2e2e}
.foot{display:flex;align-items:center;height:26px;padding-left:5px;flex:none;background:#373737}
.lb{display:flex;align-items:center;justify-content:center;width:21px;height:20px;background:#2a2a2a}
.foot af-icon{width:20px;height:20px}`,
`<div class="row"><span>Opacity:</span><af-field style="width:55px;--fg:#8a8a8a;margin-right:4px;--bg:#2e2e2e">100 %<af-chev slot="end"></af-chev></af-field><af-field style="width:223px;--bg:#2e2e2e;--fg:#8a8a8a;padding-left:5px">Normal<af-chev slot="end"></af-chev></af-field><span class="ic"><af-icon n="gearm" s="13"></af-icon></span><span class="ic"><af-icon n="lock" s="13"></af-icon></span></div>
<div class="list"></div>
<div class="foot"><div class="lb"><af-icon n="layersb" s="15"></af-icon></div><af-icon n="mbtn" s="14" style="margin-left:184px"></af-icon><af-icon n="adj" s="14"></af-icon><af-icon n="fxb" s="14"></af-icon><af-icon n="glass" s="14"></af-icon><af-icon n="folder" s="14" style="margin-left:24px"></af-icon><af-icon n="mfilt" s="14"></af-icon><af-icon n="trash" s="14"></af-icon></div>`);
def('af-transform',`:host{display:flex;flex:1;background:#373737;color:#7c7c7c;font-size:11.5px}
.an{margin:34px 0 0 17px;width:36px;height:36px;flex:none}
.main{margin:12px 0 0 5px}
.g{display:grid;grid-template-columns:25px 65px 32px 65px;grid-auto-rows:20px;row-gap:4px;align-items:center}
.l{text-align:right;padding-right:4px}
.g af-field{--bg:#2e2e2e;--fg:#8a8a8a}
.tb{display:flex;justify-content:flex-end}
.tb div{display:flex;align-items:center;justify-content:center;height:26px;background:#444}
.lk{margin:24px 0 0 7px}`,
`<af-icon class="an" n="anchor" s="37"></af-icon>
<div class="main"><div class="g">
<span class="l">X:</span><af-field>0 mm</af-field><span class="l" style="padding-right:5px">W:</span><af-field>0 mm</af-field>
<span class="l">Y:</span><af-field>0 mm</af-field><span class="l" style="padding-right:5px">H:</span><af-field>0 mm</af-field>
<span class="l" style="margin-top:12px">R:</span><af-field style="margin-top:12px">0 °<af-chev slot="end"></af-chev></af-field><span class="l" style="padding-right:5px;margin-top:12px">S:</span><af-field style="margin-top:12px">0 °<af-chev slot="end"></af-chev></af-field>
</div>
<div class="tb" style="margin-top:14px"><div style="width:30px;border-radius:2px 0 0 2px"><af-icon n="trbtn" s="18"></af-icon></div><div style="width:14px;margin-left:1px;border-radius:0 2px 2px 0"><af-chev></af-chev></div></div></div>
<af-icon class="lk" n="link" s="20" style="height:22px;width:16px"></af-icon>`);
/* Root grid */
def('af-app',`:host{display:grid;grid-template-rows:33px 45px 29px 947px 24px 2px;width:1920px;height:1080px;background:#333}
.main{display:flex;height:947px}
.left{display:flex;width:497px;flex:none;height:947px}
.gap{width:5px;flex:none;background:#333;border-right:1px solid #242424;box-sizing:border-box}
.right{display:grid;grid-template-rows:306px 481px 160px;width:378px;flex:none}
.st{display:flex;align-items:center;padding:5px 0 0 22px;font-size:12.5px;color:#a8a8a8;background:#333;box-sizing:border-box}.st b{color:#fff;margin-right:4px;font-weight:700}
.end{position:relative;background:#1f1f1f}.end i{position:absolute;left:48px;width:288px;top:0;height:1px;background:#5c5c5c}.end u{position:absolute;left:730px;width:49px;top:0;height:1px;background:#5c5c5c}`,
`<slot name="menu"></slot><slot name="bar"></slot><slot name="ctx"></slot>
<div class="main"><div class="left"><slot name="tools"></slot><slot name="cust"></slot></div><slot name="doc"></slot><div class="gap"></div><div class="right"><slot name="p1"></slot><slot name="p2"></slot><slot name="p3"></slot></div></div>
<div class="st"><b>Drag</b> to pan view.</div><div class="end"><i></i><u></u></div>`);

/* ---------- page assembly ---------- */
const ic=(n,c)=>`<af-icon n="${n}"${c?' c':''}></af-icon>`;
const menu=[['File',44],['Edit',46],['Text',47],['Document',81],['Layer',54],['Select',57],['Arrange',68],['Filters',57],['View',51],['Window',70],['Help',50]];
const leftTools=[['hand'],['arrow'],['pickl',1],['crop'],['selb'],['wand'],['rsel',1],['flood'],['swap'],['bpink',1],['mix'],['erd',1],['mag',1],['stamp'],['smudge'],['finger',1],['redeye',1],['warrow',1],['srect',1],['atxt',1],['grid',1],['zoomt']];
const gridTools=[
['hand'],['arrow'],['crop'],['pickb',1],['pickb'],['pickl'],['selb'],['wand'],['rsel',1],['rsel'],['esel'],
['vsel'],['hsel'],['lasso'],['flood'],['swap'],['bpink',1],['bpink'],['brepl'],['pixel'],['mix'],['erd',1],
['erd'],['erc'],['erw'],['mag',1],['mag'],['flame'],['sponge'],['stamp'],['smudge'],['drop',1],['drop'],
['sharp'],['scale'],['finger'],['dust',1],['dust'],['patch'],['band'],['redeye'],['target'],['nib',1],['nib'],
['warrow'],['pic'],['ruler'],['cols'],['srect',1],['atxt',1],['atxt'],['ttxt'],['mesh',1],['mesh'],['grid'],
['zoomt'],['glowb'],['glowo'],['cube'],['rdot'],['cresc'],['gstar'],['apert'],['rings'],['yring'],['dropp'],
['dropm'],['flower'],['bgear'],['triA'],['triD'],['wcirc'],['oblob'],['spiral'],['hglass'],['btarget'],['brings'],
['tmesh'],['tcheck'],['ochk'],['waves'],['swoosh'],['cross'],['pno'],['psq'],['gsq'],['ring2'],['sq2'],
['olive'],['gblue'],['gno'],['gwave'],['ball'],['torch'],['panels'],['sun'],['stripes'],['ssq'],['scirc'],
['srnd'],['stri'],['sdia'],['strap'],['spent'],['sstar'],['sburst'],['scog'],['sarr'],['sdon'],['spie'],
['shalf'],['smoon'],['sgear'],['scloud'],['sbub'],['sbub2'],['stear'],['sheart'],['scat'],['sline']];
const tb=(n,a='')=>`<af-tbtn ${a}><af-icon n="${n}" s="19"></af-icon></af-tbtn>`;
const chevb=`<af-tbtn narrow><af-chev></af-chev></af-tbtn>`;
const grp=(ml,inner)=>`<af-group style="margin-left:${ml}px">${inner}</af-group>`;
document.body.innerHTML=`<af-app>
<af-menubar slot="menu">
${menu.map(([t,w],i)=>`<af-menu-item style="width:${w}px${i==0?';margin-left:22px':''}">${t}</af-menu-item>`).join('')}
<span slot="win" style="display:inline-block;width:9px;height:2px;background:#ddd;margin:6px 20px 0 0"></span>
<svg slot="win" width="10" height="10" viewBox="0 0 10 10" style="margin:-6px 20px 0 0"><path d="M3 2.5V.5h6.5V7H7.5M.5 3h6.5v6.5H.5z" fill="none" stroke="#ddd"/></svg>
<svg slot="win" width="10" height="10" viewBox="0 0 10 10" style="margin:-6px 3px 0 0"><path d="M.5.5l9 9M9.5.5l-9 9" stroke="#ddd" stroke-width="1.1"/></svg>
</af-menubar>
<af-toolbar slot="bar">
<af-persona on><af-icon n="persona" s="24"></af-icon></af-persona>
<af-persona><af-icon n="liq" s="23"></af-icon></af-persona>
<af-persona><af-icon n="dev" s="23"></af-icon></af-persona>
<af-persona><af-icon n="tone" s="23"></af-icon></af-persona>
<af-persona last><af-icon n="exp" s="22"></af-icon></af-persona>
${grp(137,tb('hist')+tb('tonei')+tb('wheel')+tb('scope'))}
${grp(134,tb('sfull')+tb('sx')+tb('sinv'))}
${grp(42,tb('mask')+chevb)}
${grp(133,tb('snapg','dark')+tb('snapr')+tb('magnet','dark')+chevb)}
${grp(42,tb('robot'))}
${grp(134,tb('d1','dim')+tb('d2','dim')+tb('d3','dim')+tb('d4','dim'))}
${grp(42,tb('d5','dim'))}
${grp(42,tb('d6','dim'))}
${grp(22,tb('op1')+tb('op2')+tb('op3'))}
${grp(133,tb('user'))}
</af-toolbar>
<af-context slot="ctx">
<af-ctx style="width:39px;padding-left:9px">Pan</af-ctx>
<af-ctx style="width:300px;padding-left:6px">2480 × 3507px, 8.70MP, RGBA/8 - sRGB IEC61966-2.1</af-ctx>
<af-ctx style="width:104px;padding-left:6px">No Camera Data</af-ctx>
<af-ctx last style="padding-left:7px;width:46px">Units:</af-ctx>
<af-field style="width:102px;height:17px;--bg:#484848;--fg:#e0e0e0;padding:0 5px 0 4px">Millimetres<af-chev slot="end"></af-chev></af-field>
</af-context>
<af-tools slot="tools">${leftTools.map(([n,c])=>ic(n,c)).join('')}</af-tools>
<af-customise slot="cust">${gridTools.map(([n,c])=>ic(n,c)).join('')}
<span slot="foot" style="width:102px;color:#a8a8a8;white-space:nowrap;font-size:10.9px;padding-top:1px">Number of Columns:</span>
<af-field slot="foot" style="width:73px;height:18px;--bg:#484848;--fg:#e8e8e8;padding:0 5px 0 5px">1<af-chev slot="end"></af-chev></af-field>
<af-btn slot="foot" style="margin-left:110px">Reset</af-btn>
<af-btn slot="foot" style="margin-left:5px">Close</af-btn>
</af-customise>
<af-doc slot="doc"><af-page></af-page></af-doc>
<af-panel slot="p1"><af-tab slot="tab" style="width:61px">Histogram</af-tab><af-tab slot="tab" style="width:42px">Colour</af-tab><af-tab slot="tab" on style="width:54px">Swatches</af-tab><af-swatches></af-swatches></af-panel>
<af-panel slot="p2"><af-tab slot="tab" style="width:39px">States</af-tab><af-tab slot="tab" on style="width:39px">Layers</af-tab><af-tab slot="tab" style="width:55px;padding-left:5px">Channels</af-tab><af-tab slot="tab" style="width:36px">Stock</af-tab><af-tab slot="tab" style="width:38px">Styles</af-tab><af-tab slot="tab" style="width:60px">Brushes</af-tab><af-layers></af-layers></af-panel>
<af-panel slot="p3"><af-tab slot="tab" style="width:57px">Navigator</af-tab><af-tab slot="tab" on style="width:59px;padding-left:5px">Transform</af-tab><af-tab slot="tab" style="width:60px">History</af-tab><af-transform></af-transform></af-panel>
</af-app>`;
</script>
</body></html>
